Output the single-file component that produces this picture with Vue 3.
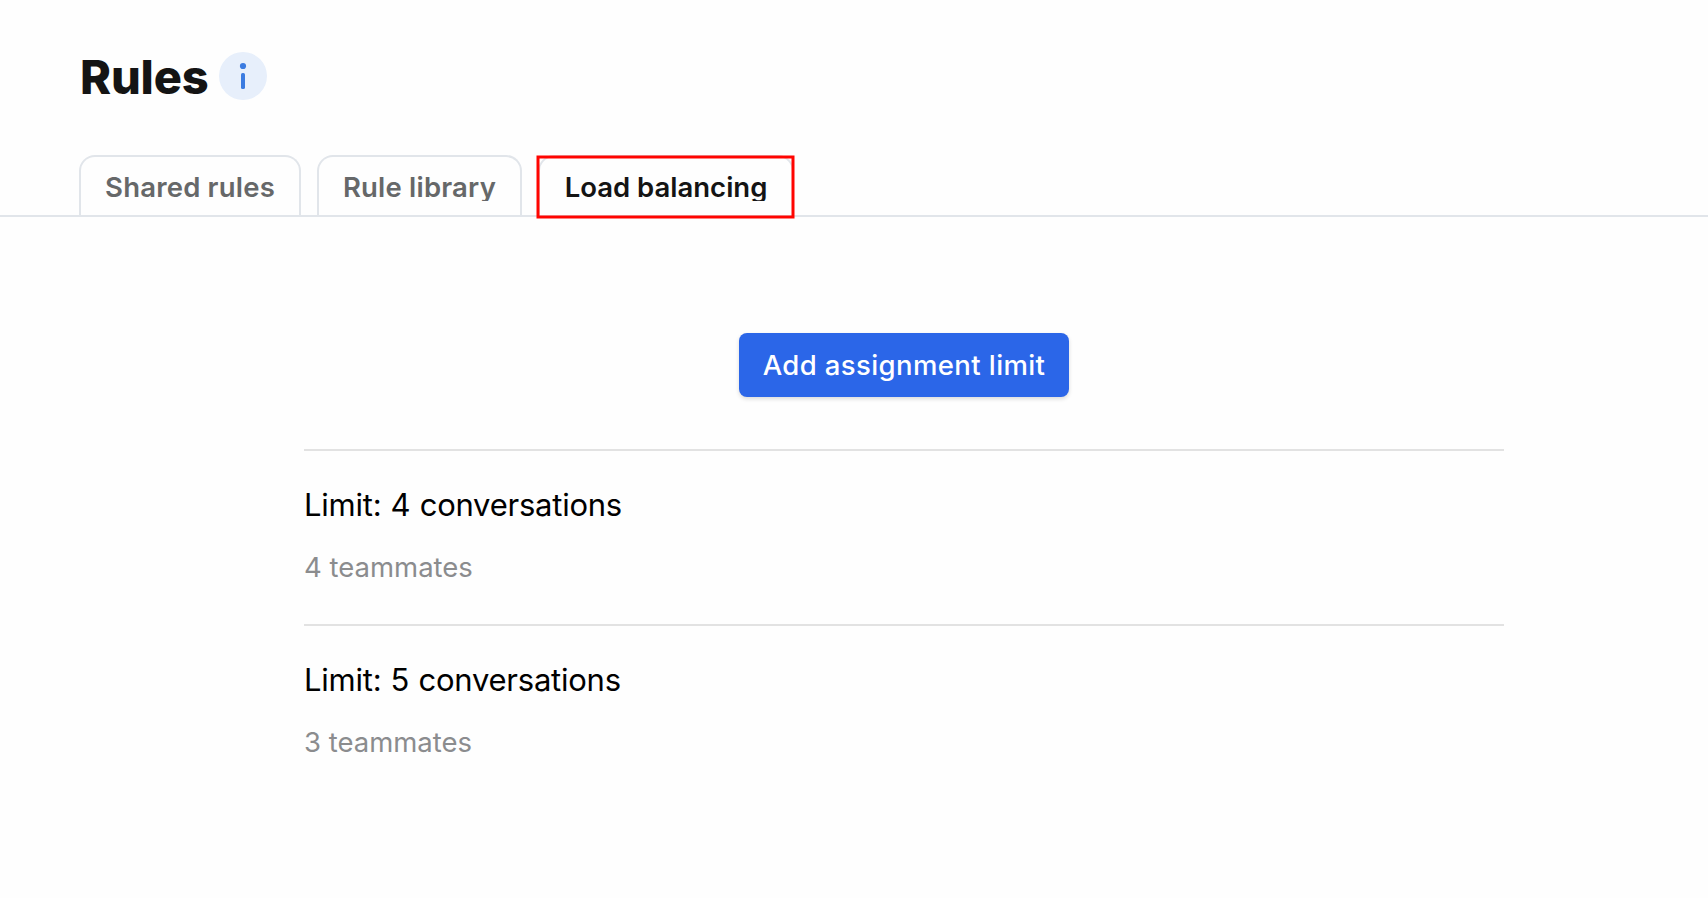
<script setup>
import { ref } from "vue";

const tabs = [
  { id: "shared", label: "Shared rules" },
  { id: "library", label: "Rule library" },
  { id: "balancing", label: "Load balancing" },
];
const activeTab = ref("balancing");

const limits = ref([
  { id: 1, conversations: 4, teammates: 4 },
  { id: 2, conversations: 5, teammates: 3 },
]);
</script>

<template>
  <main class="page">
    <header class="page-header">
      <h1 class="page-title">Rules</h1>
      <button class="info-button" type="button" aria-label="Info">
        <svg width="48" height="48" viewBox="0 0 48 48">
          <circle cx="24" cy="14" r="3.1" fill="#3b7be0" />
          <rect x="22" y="21" width="4" height="16" rx="1.6" fill="#3b7be0" />
        </svg>
      </button>
    </header>

    <nav class="tabs">
      <button
        v-for="tab in tabs"
        :key="tab.id"
        type="button"
        class="tab"
        :class="['tab--' + tab.id, { 'is-active': tab.id === activeTab }]"
        @click="activeTab = tab.id"
      >
        <span class="tab__label">{{ tab.label }}</span>
        <svg
          v-if="tab.id === activeTab"
          class="tab__highlight"
          width="262"
          height="68"
          viewBox="0 0 262 68"
        >
          <rect x="4" y="4" width="255" height="60" fill="none" stroke="#ff0400" stroke-width="3" />
        </svg>
      </button>
    </nav>

    <section class="content">
      <button class="add-button" type="button">Add assignment limit</button>

      <ul class="limits">
        <li v-for="limit in limits" :key="limit.id" class="limit">
          <p class="limit__title">Limit: {{ limit.conversations }} conversations</p>
          <p class="limit__teammates">{{ limit.teammates }} teammates</p>
        </li>
      </ul>
    </section>
  </main>
</template>

<style>
body {
  margin: 0;
  background: #fefefe;
}
</style>

<style scoped>
.page {
  box-sizing: border-box;
  min-height: 898px;
  padding-top: 48px;
  background: #fefefe;
  font-family: Inter, "Liberation Sans", sans-serif;
}

.page-header {
  display: flex;
  align-items: center;
  gap: 11px;
  height: 56px;
  padding-left: 80px;
}

.page-title {
  width: 128px;
  margin: 0;
  padding-top: 2px;
  font-size: 47px;
  line-height: 56px;
  font-weight: 800;
  letter-spacing: -0.2px;
  color: #141414;
  white-space: nowrap;
}

.info-button {
  width: 48px;
  height: 48px;
  padding: 0;
  border: none;
  border-radius: 50%;
  background: #e7effb;
  cursor: pointer;
}

.info-button svg {
  display: block;
}

.tabs {
  display: flex;
  gap: 16px;
  height: 60px;
  margin-top: 51px;
  padding-left: 79px;
  border-bottom: 2px solid #e1e5ea;
}

.tab {
  position: relative;
  box-sizing: border-box;
  height: 60px;
  padding: 16px 0 0;
  border: 2px solid #e1e5ea;
  border-bottom: none;
  border-radius: 16px 16px 0 0;
  background: #fefefe;
  font-family: inherit;
  font-size: 27.5px;
  font-weight: 600;
  color: #666869;
  text-align: center;
  cursor: pointer;
  display: flex;
  justify-content: center;
  align-items: flex-start;
}

.tab--shared {
  width: 222px;
  letter-spacing: 0.2px;
}

.tab--library {
  width: 205px;
  letter-spacing: 0.2px;
}

.tab--balancing {
  width: 256px;
}

.tab.is-active {
  color: #141414;
}

.tab__label {
  height: 28px;
  overflow: hidden;
  line-height: 28px;
  white-space: nowrap;
}

.tab__highlight {
  position: absolute;
  top: -4px;
  left: -6px;
}

.content {
  display: flex;
  flex-direction: column;
  align-items: center;
  width: 1200px;
  margin-left: 304px;
  padding-top: 116px;
}

.add-button {
  width: 330px;
  height: 64px;
  padding: 0;
  border: none;
  border-radius: 8px;
  background: #2b66e8;
  box-shadow: 0 2px 4px rgba(0, 0, 0, 0.14);
  font-family: inherit;
  font-size: 27.5px;
  font-weight: 500;
  letter-spacing: 0.4px;
  color: #fff;
  white-space: nowrap;
  cursor: pointer;
}

.limits {
  width: 100%;
  margin: 52px 0 0;
  padding: 0;
  list-style: none;
}

.limit {
  box-sizing: border-box;
  height: 175px;
  padding-top: 34px;
  border-top: 2px solid #e2e2e2;
}

.limit p {
  margin: 0;
  white-space: nowrap;
}

.limit__title {
  font-size: 31px;
  line-height: 40px;
  letter-spacing: -0.24px;
  word-spacing: 0.8px;
  color: #000;
}

.limit .limit__teammates {
  margin-top: 24px;
  font-size: 27.5px;
  line-height: 36px;
  color: #8b8c8e;
}
</style>
